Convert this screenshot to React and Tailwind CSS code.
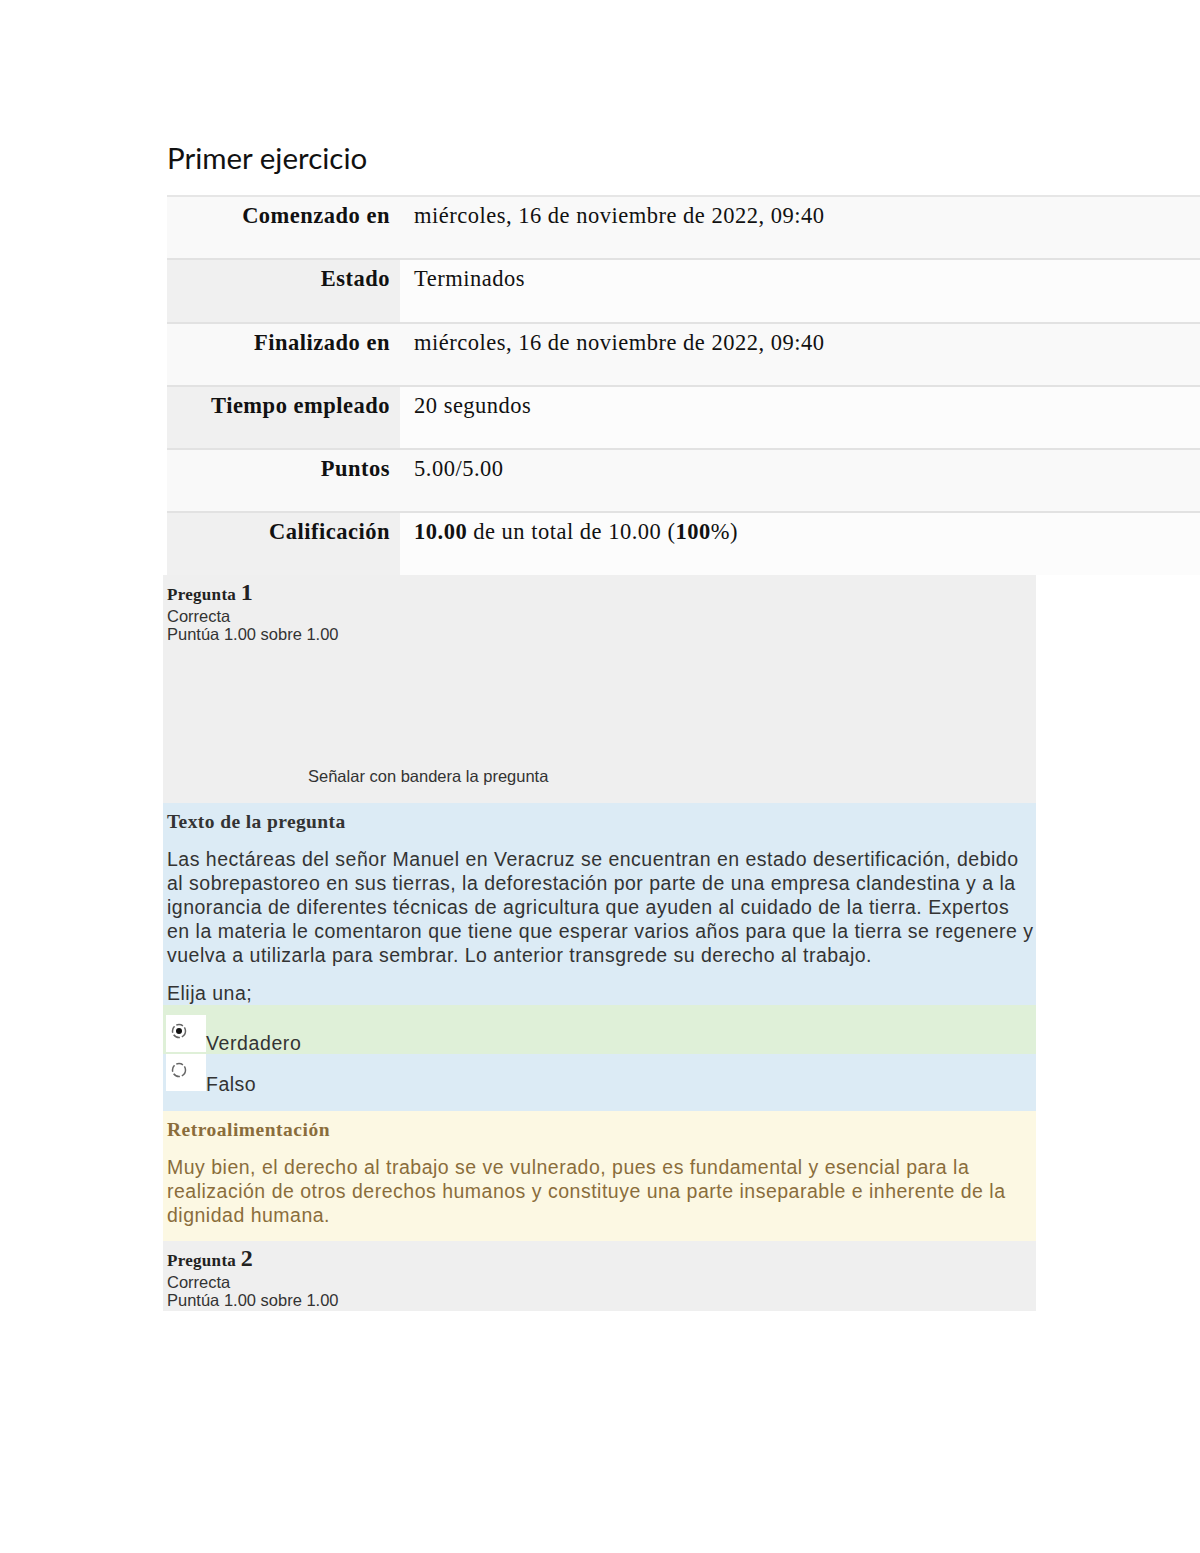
import React from "react";

const ROWS = [
  { label: "Comenzado en", value: "miércoles, 16 de noviembre de 2022, 09:40", alt: false },
  { label: "Estado", value: "Terminados", alt: true },
  { label: "Finalizado en", value: "miércoles, 16 de noviembre de 2022, 09:40", alt: false },
  { label: "Tiempo empleado", value: "20 segundos", alt: true },
  { label: "Puntos", value: "5.00/5.00", alt: false },
  {
    label: "Calificación",
    value: (
      <>
        <b>10.00</b> de un total de 10.00 (<b>100</b>%)
      </>
    ),
    alt: true,
  },
];

const QUESTION_LINES = [
  "Las hectáreas del señor Manuel en Veracruz se encuentran en estado desertificación, debido",
  "al sobrepastoreo en sus tierras, la deforestación por parte de una empresa clandestina y a la",
  "ignorancia de diferentes técnicas de agricultura que ayuden al cuidado de la tierra. Expertos",
  "en la materia le comentaron que tiene que esperar varios años para que la tierra se regenere y",
  "vuelva a utilizarla para sembrar. Lo anterior transgrede su derecho al trabajo.",
];

const FEEDBACK_LINES = [
  "Muy bien, el derecho al trabajo se ve vulnerado, pues es fundamental y esencial para la",
  "realización de otros derechos humanos y constituye una parte inseparable e inherente de la",
  "dignidad humana.",
];

const serif = "font-['Liberation_Serif','Times_New_Roman',serif]";
const sans = "font-['Liberation_Sans',Arial,sans-serif]";

function Radio({ checked }) {
  return (
    <svg width="18" height="18" viewBox="0 0 18 18">
      <circle
        cx="9"
        cy="9"
        r="6.5"
        fill="white"
        stroke="#666"
        strokeWidth="1.5"
        strokeDasharray="7 2"
      />
      {checked && <circle cx="9" cy="9" r="3" fill="#111" />}
    </svg>
  );
}

function QuestionInfo({ num, tall }) {
  return (
    <div className={`bg-[#efefef] ${tall ? "h-[228px]" : "h-[70px]"} pt-[5px] pl-[4px] flex flex-col`}>
      <div className={`${serif} text-[#222] leading-[24px]`}>
        <span className="font-bold text-[17px] tracking-[0.3px]">Pregunta </span>
        <span className="text-[24px] font-bold">{num}</span>
      </div>
      <div className={`${sans} text-[16.5px] leading-[18px] text-[#333]`}>Correcta</div>
      <div className={`${sans} text-[16.5px] leading-[18px] text-[#333]`}>Puntúa 1.00 sobre 1.00</div>
      {tall && (
        <div className={`${sans} text-[16.5px] text-[#333] mt-auto mb-[14px] pl-[141px]`}>
          Señalar con bandera la pregunta
        </div>
      )}
    </div>
  );
}

export default function App() {
  return (
    <div className="min-h-[1553px] bg-white overflow-hidden">
      <div className="pl-[163px] pt-[140px]">
        <h1 className="font-['Lato',sans-serif] text-[29.5px] leading-[36px] text-[#111] pl-[4px] mb-[19px]">
          Primer ejercicio
        </h1>

        {/* resumen */}
        <div className="ml-[4px] w-[1040px]">
          {ROWS.map((r) => (
            <div key={r.label} className="flex h-[63.3px] border-t-2 border-[#e2e2e2] first:border-[#e6e6e6]">
              <div
                className={`w-[233px] shrink-0 text-right pr-[10px] pt-[5px] ${serif} font-bold text-[22.5px] tracking-[0.5px] leading-[28px] text-[#111] ${
                  r.alt ? "bg-[#f0f0f0]" : "bg-[#f9f9f9]"
                }`}
              >
                {r.label}
              </div>
              <div
                className={`flex-1 pl-[14px] pt-[5px] ${serif} text-[22.5px] tracking-[0.5px] leading-[28px] text-[#111] ${
                  r.alt ? "bg-[#fcfcfc]" : "bg-[#f9f9f9]"
                }`}
              >
                {r.value}
              </div>
            </div>
          ))}
        </div>

        {/* pregunta 1 */}
        <div className="w-[873px]">
          <QuestionInfo num="1" tall />

          <div className="bg-[#dcebf5] pl-[4px] pt-[8px]">
            <div className={`${serif} font-bold text-[19.5px] tracking-[0.4px] leading-[22px] text-[#333]`}>
              Texto de la pregunta
            </div>
            <div className={`${sans} text-[19.5px] leading-[24px] text-[#333] mt-[14px]`}>
              {QUESTION_LINES.map((l) => (
                <div key={l} className="whitespace-nowrap tracking-[0.5px]">{l}</div>
              ))}
            </div>
            <div className={`${sans} text-[19.5px] leading-[24px] tracking-[0.5px] text-[#333] mt-[14px]`}>Elija una;</div>
          </div>

          <div className="bg-[#dcebf5] pb-[20px]">
            <div className="bg-[#dff0d8] h-[49px] pt-[10px] flex items-start">
              <div className="w-[40px] h-[37px] bg-white ml-[3px] pl-[4px] pt-[7px]">
                <Radio checked />
              </div>
              <div className={`${sans} text-[19.5px] text-[#333] pt-[16px] leading-[24px] tracking-[0.6px]`}>
                Verdadero
              </div>
            </div>
            <div className="h-[37px] flex items-start">
              <div className="w-[40px] h-[37px] bg-white ml-[3px] pl-[4px] pt-[7px]">
                <Radio />
              </div>
              <div className={`${sans} text-[19.5px] text-[#333] pt-[18px] leading-[24px] tracking-[0.5px]`}>Falso</div>
            </div>
          </div>

          {/* retroalimentacion */}
          <div className="bg-[#fcf8e3] h-[130px] pl-[4px] pt-[8px]">
            <div className={`${serif} font-bold text-[19.5px] tracking-[0.5px] leading-[22px] text-[#8a6d3b]`}>
              Retroalimentación
            </div>
            <div className={`${sans} text-[19.5px] leading-[24px] text-[#8a6d3b] mt-[14px]`}>
              {FEEDBACK_LINES.map((l) => (
                <div key={l} className="whitespace-nowrap tracking-[0.5px]">{l}</div>
              ))}
            </div>
          </div>

          <QuestionInfo num="2" />
        </div>
      </div>
    </div>
  );
}
